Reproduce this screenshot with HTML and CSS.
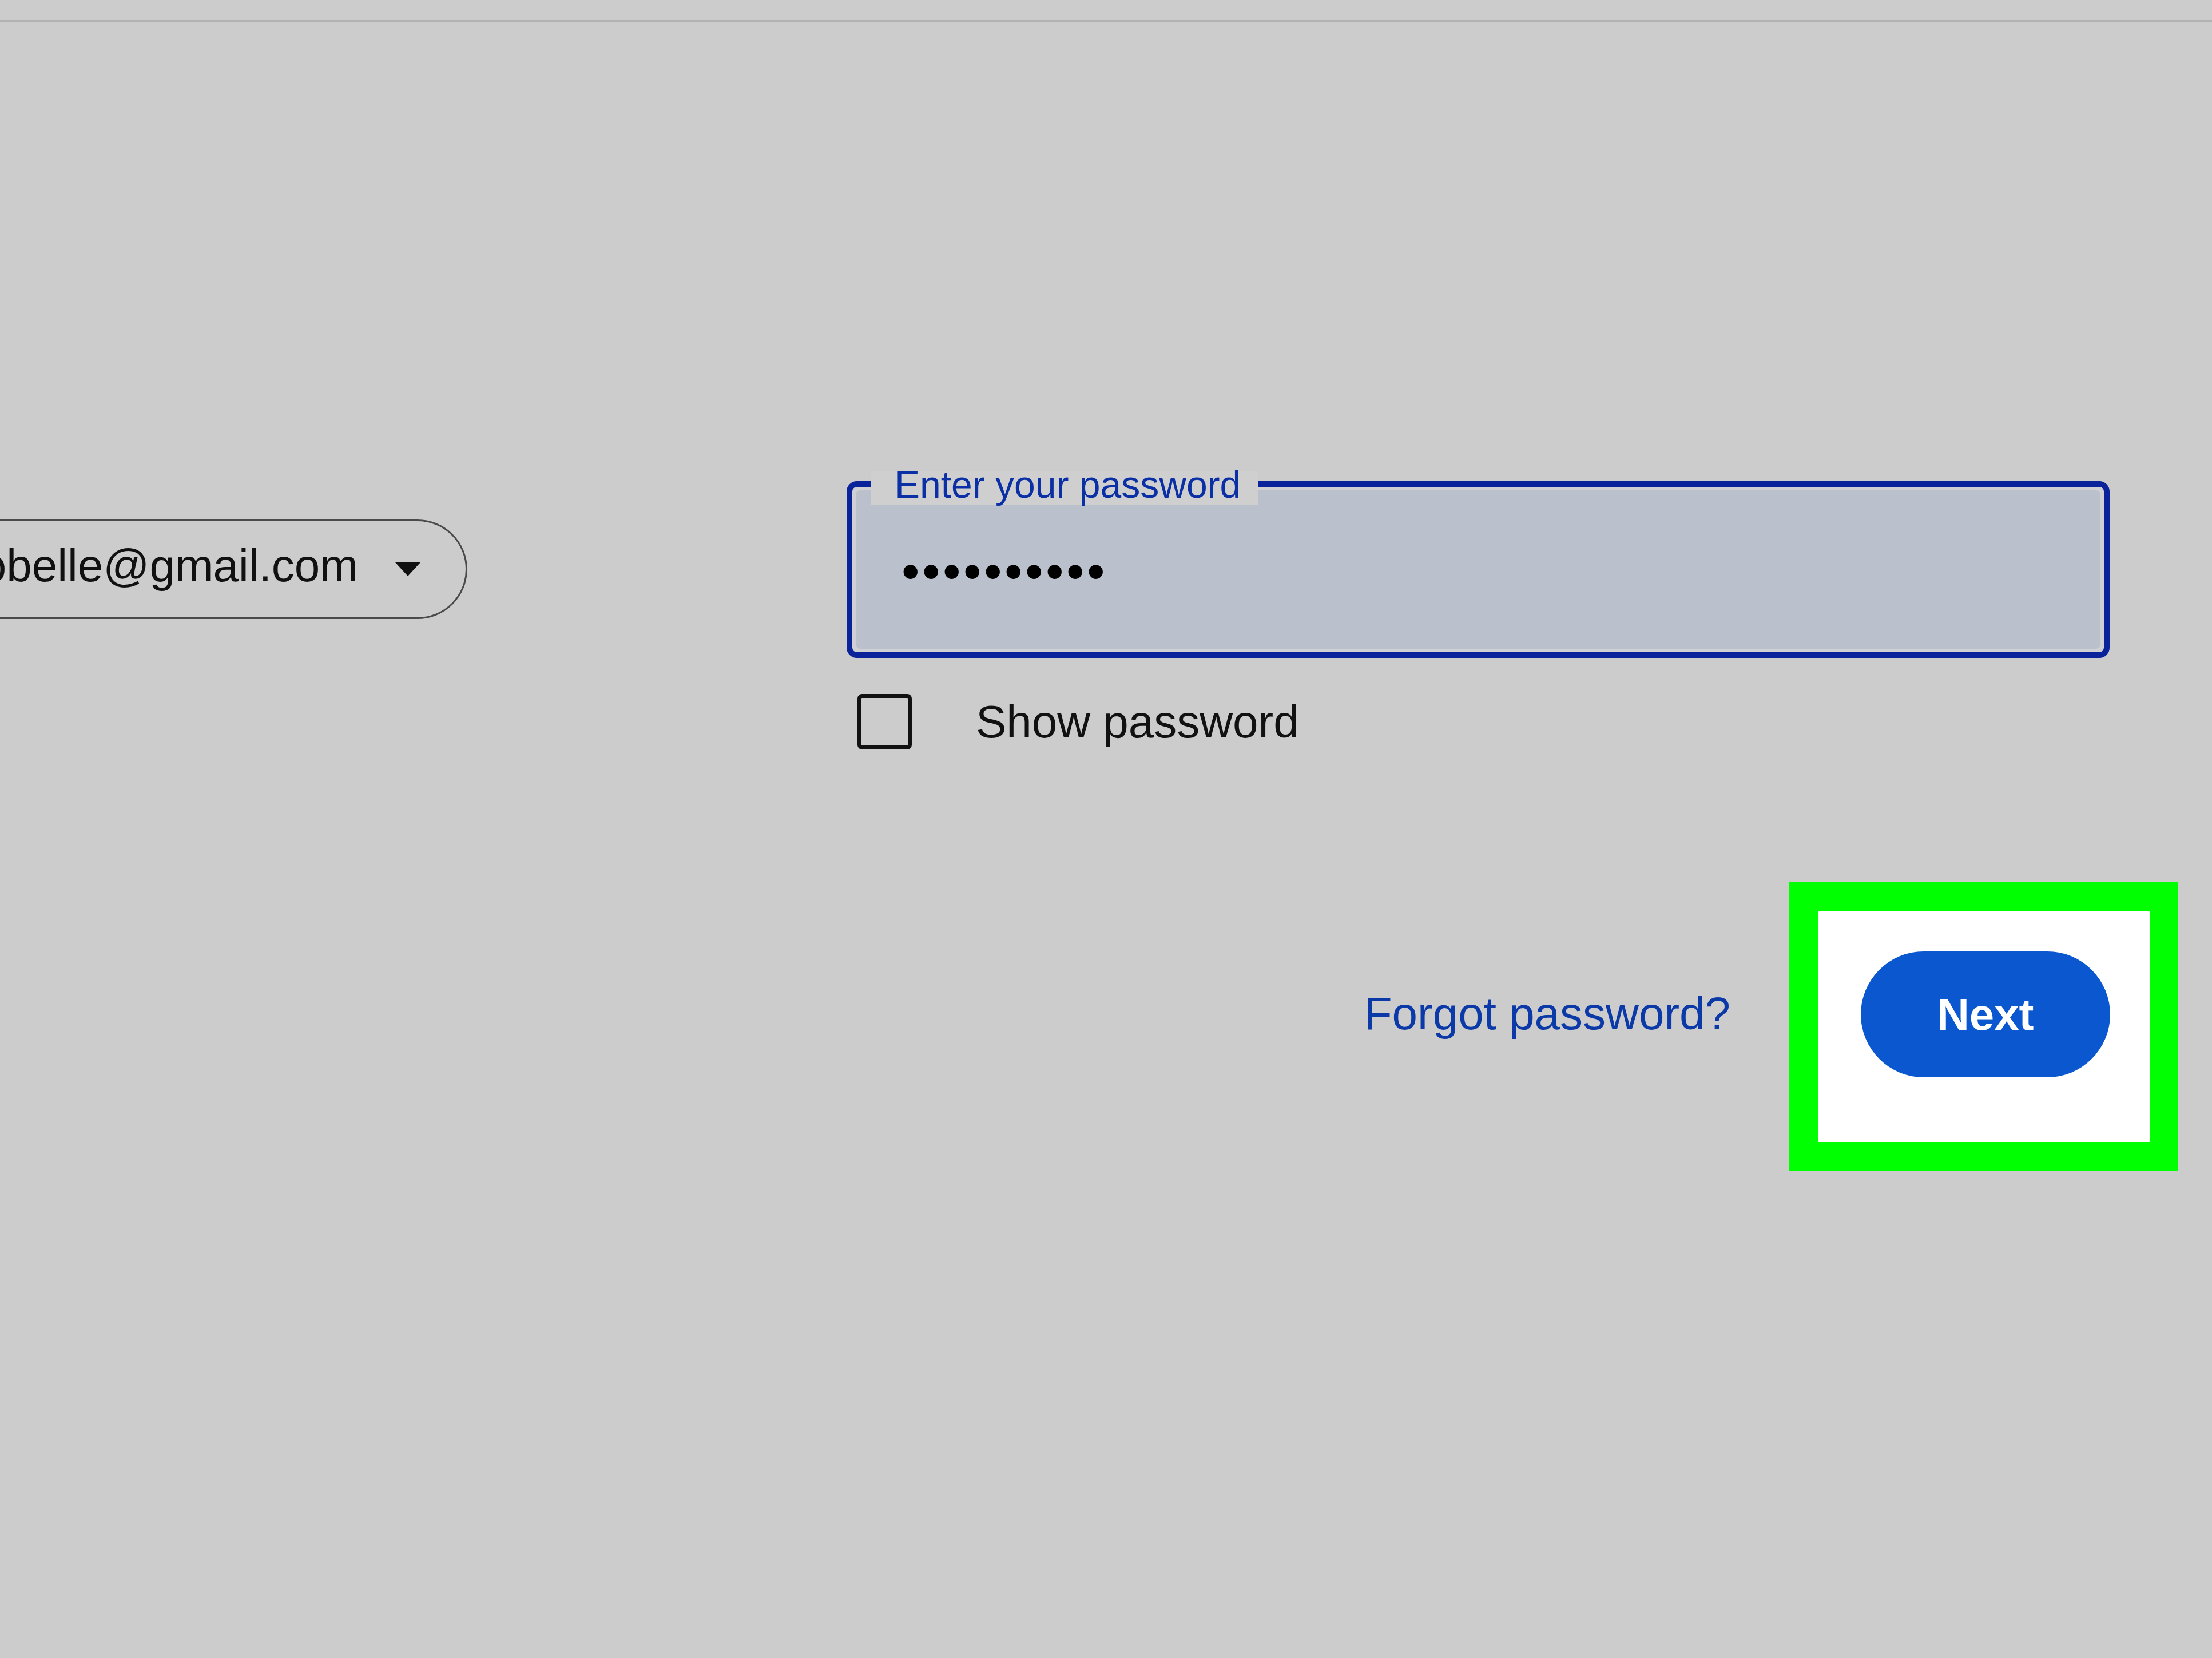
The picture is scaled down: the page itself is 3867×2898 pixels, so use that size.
FILE: index.html
```html
<!DOCTYPE html>
<html lang="en">
<head>
<meta charset="utf-8">
<title>Enter your password</title>
<link rel="stylesheet" href="styles.css">
</head>
<body>
<div class="topbar"></div>
<main class="main">
  <section class="left">
    <div class="account-pill">
      <span class="account-email">isobelle@gmail.com</span>
      <svg class="caret" viewBox="0 0 44 24" width="44" height="24"><polygon points="0,0 44,0 22,24" fill="#111"/></svg>
    </div>
  </section>
  <section class="right">
    <div class="field">
      <div class="field-label">Enter your password</div>
      <div class="field-fill">
        <span class="dots">••••••••••</span>
      </div>
    </div>
    <label class="show-row">
      <span class="checkbox"></span>
      <span class="show-text">Show password</span>
    </label>
    <div class="actions">
      <a class="forgot">Forgot password?</a>
      <div class="highlight">
        <button class="next-btn">Next</button>
      </div>
    </div>
  </section>
</main>
</body>
</html>
```
FILE: styles.css
```css
html, body {
  margin: 0;
  padding: 0;
}
body {
  width: 3867px;
  height: 2898px;
  overflow: hidden;
  background: #cccccc;
  font-family: "Liberation Sans", Arial, sans-serif;
}
.topbar {
  height: 35px;
  border-bottom: 4px solid #b2b2b2;
}
.main {
  display: flex;
  padding-top: 802px;
}
.left {
  width: 1480px;
  flex: none;
}
.account-pill {
  box-sizing: border-box;
  width: 1017px;
  height: 174px;
  margin-left: -200px;
  margin-top: 67px;
  border: 3px solid #4a4a4a;
  border-radius: 0 87px 87px 0;
  display: flex;
  align-items: center;
  justify-content: flex-end;
  padding-right: 79px;
}
.account-email {
  font-size: 80px;
  line-height: 92px;
  color: #111;
  margin-bottom: 12px;
  margin-right: 65px;
  white-space: nowrap;
}
.caret {
  display: block;
}
.right {
  width: 2328px;
  flex: none;
}
.field {
  position: relative;
  box-sizing: border-box;
  width: 2208px;
  height: 309px;
  border: 10px solid #0a239b;
  border-radius: 18px;
  padding: 6px;
  background: #cfd0d3;
}
.field-label {
  position: absolute;
  left: 33px;
  top: -28px;
  box-sizing: border-box;
  width: 677px;
  height: 59px;
  padding: 0 0 0 41px;
  background: #cfcfd0;
  color: #0b2fa5;
  font-size: 66px;
  line-height: 48px;
  white-space: nowrap;
}
.field-fill {
  height: 100%;
  background: #bbc1cc;
  border-radius: 8px;
  display: flex;
  align-items: center;
  padding-left: 80px;
}
.dots {
  font-size: 90px;
  line-height: 100px;
  letter-spacing: 4.5px;
  color: #000;
  margin-top: 6px;
}
.show-row {
  display: flex;
  align-items: center;
  margin-top: 63px;
  padding-left: 19px;
}
.checkbox {
  box-sizing: border-box;
  width: 95px;
  height: 97px;
  border: 7px solid #111;
  border-radius: 8px;
  flex: none;
}
.show-text {
  margin-left: 112px;
  font-size: 80px;
  line-height: 92px;
  color: #111;
}
.actions {
  display: flex;
  justify-content: flex-end;
  align-items: flex-start;
  margin-top: 232px;
}
.forgot {
  font-size: 80px;
  line-height: 92px;
  color: #0b3aa8;
  margin-top: 184px;
  margin-right: 103px;
}
.highlight {
  border: 50px solid #00ff00;
  background: #ffffff;
  padding: 71px 69px 113px 75px;
}
.next-btn {
  display: block;
  width: 436px;
  height: 220px;
  border: none;
  border-radius: 110px;
  background: #0b57d0;
  color: #ffffff;
  font-family: "Liberation Sans", Arial, sans-serif;
  font-weight: bold;
  font-size: 78px;
  padding: 0;
}
```
